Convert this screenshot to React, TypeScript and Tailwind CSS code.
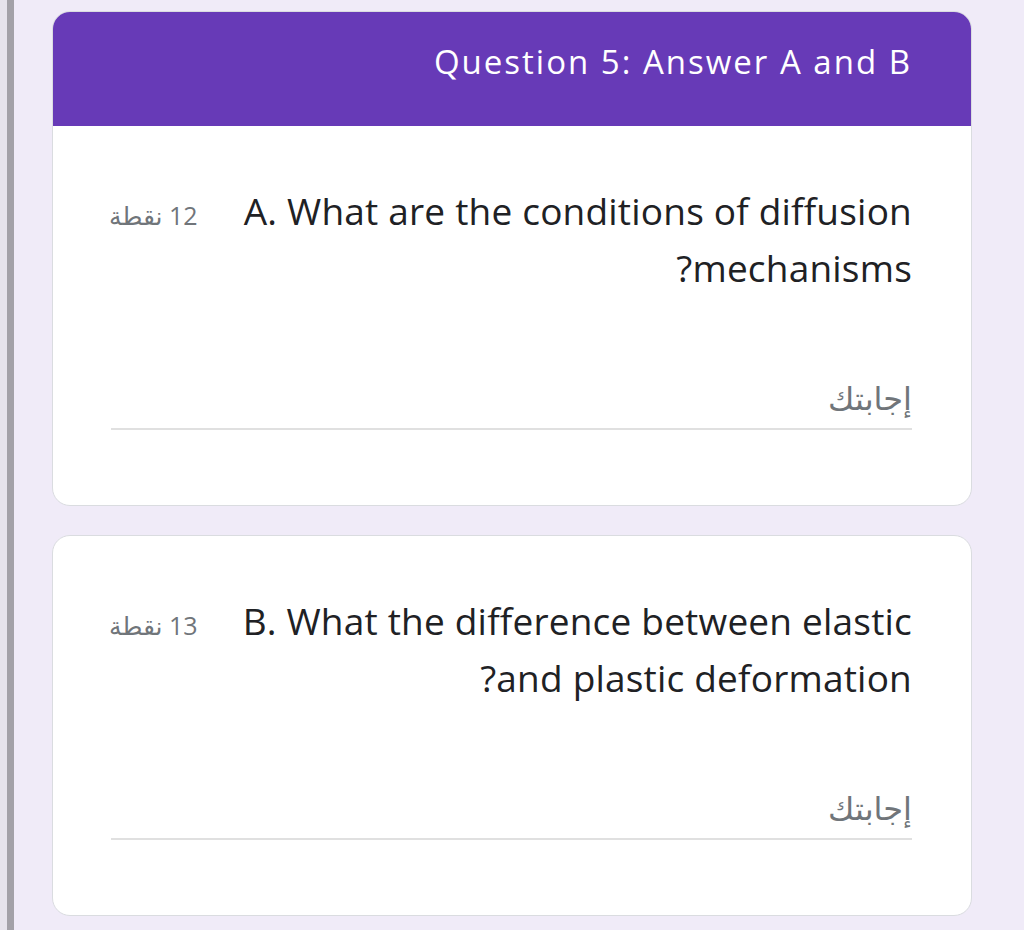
export default function App() {
  const questions = [
    { id: "a", points: "12 نقطة", text: "A. What are the conditions of diffusion mechanisms?" },
    { id: "b", points: "13 نقطة", text: "B. What the difference between elastic and plastic deformation?" },
  ];

  return (
    <div className="min-h-screen flex bg-[#f0ebf8] font-['Open_Sans','DejaVu_Sans',sans-serif]">
      <div className="w-[7px] bg-[#e6e3ec]" />
      <div className="w-[7px] bg-[#a3a1a8]" />
      <div dir="rtl" className="flex-1 flex flex-col gap-[29px] pt-[11px] pr-[52px] pl-[38px]">
        <div className="rounded-[18px] bg-white border border-[#dadce0] overflow-hidden">
          <div className="h-[114px] bg-[#673ab7] flex items-center pr-[59px] pb-[14px]">
            <h1 className="text-[33px] tracking-[2px] text-white">Question 5: Answer A and B</h1>
          </div>
          <QuestionBody points={questions[0].points} text={questions[0].text} />
        </div>
        <div className="rounded-[18px] bg-white border border-[#dadce0]">
          <QuestionBody points={questions[1].points} text={questions[1].text} />
        </div>
      </div>
    </div>
  );
}

function QuestionBody({ points, text }: { points: string; text: string }) {
  return (
    <div className="pt-[56px] pr-[59px] pl-[56px] pb-[75px]">
      <div className="flex items-baseline justify-between gap-[40px]">
        <p className="text-[37px] tracking-[0.2px] leading-[57px] text-[#202124]">{text}</p>
        <span className="shrink-0 text-[25px] text-[#70757a]">{points}</span>
      </div>
      <div className="mt-[82px] ml-[2px] border-b-2 border-[#e0e0e0] pb-[10px]">
        <span className="text-[32px] leading-[40px] text-[#70757a]">إجابتك</span>
      </div>
    </div>
  );
}
